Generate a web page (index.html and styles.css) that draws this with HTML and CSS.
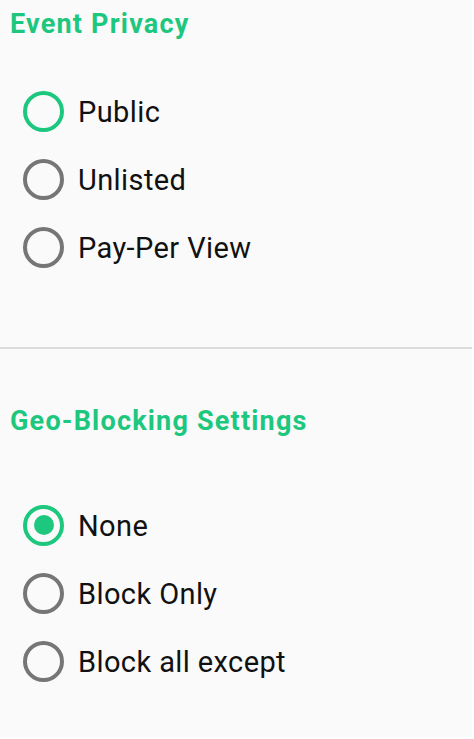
FILE: index.html
```html
<html>

<head>
	<link rel="stylesheet" href="styles.css">
</head>

<body>
	<div class="screen">
		<section class="group first">
			<h2 class="title">Event Privacy</h2>
			<div class="options">
				<label class="option"><span class="radio on"></span><span class="text">Public</span></label>
				<label class="option"><span class="radio"></span><span class="text">Unlisted</span></label>
				<label class="option"><span class="radio"></span><span class="text">Pay-Per View</span></label>
			</div>
		</section>

		<hr class="divider">

		<section class="group second">
			<h2 class="title">Geo-Blocking Settings</h2>
			<div class="options">
				<label class="option"><span class="radio on checked"></span><span class="text">None</span></label>
				<label class="option"><span class="radio"></span><span class="text">Block Only</span></label>
				<label class="option"><span class="radio"></span><span class="text">Block all except</span></label>
			</div>
		</section>
	</div>
</body>

</html>
```

FILE: styles.css
```css
body {
	margin: 0;
	background-color: #ffffff;
	font-family: Roboto, "Liberation Sans", sans-serif;
}

.screen {
	width: 472px;
	height: 737px;
	background-color: #fafafa;
	overflow: hidden;
}

.group {
	display: flex;
	flex-direction: column;
}

.first {
	padding-top: 9px;
}

.second {
	padding-top: 57px;
}

.title {
	margin: 0;
	padding-left: 10px;
	font-size: 27px;
	line-height: 30px;
	font-weight: bold;
	letter-spacing: 1.2px;
	color: #1dc77e;
}

.first .options {
	margin-top: 38px;
}

.second .options {
	margin-top: 55px;
}

.options {
	display: flex;
	flex-direction: column;
	padding-left: 23px;
}

.option {
	display: flex;
	align-items: center;
	height: 68px;
	gap: 14px;
}

.radio {
	box-sizing: border-box;
	width: 41px;
	height: 41px;
	border: 4px solid #767676;
	border-radius: 50%;
	display: flex;
	align-items: center;
	justify-content: center;
}

.radio.on {
	border-color: #1dc77e;
}

.radio.checked::after {
	content: "";
	width: 20px;
	height: 20px;
	border-radius: 50%;
	background-color: #1dc77e;
}

.text {
	font-size: 29px;
	line-height: 68px;
	letter-spacing: 0.4px;
	color: #111111;
	padding-top: 2px;
}

.divider {
	margin: 66px 0 0 0;
	border: none;
	height: 2px;
	background-color: #dcdcdc;
}
```
